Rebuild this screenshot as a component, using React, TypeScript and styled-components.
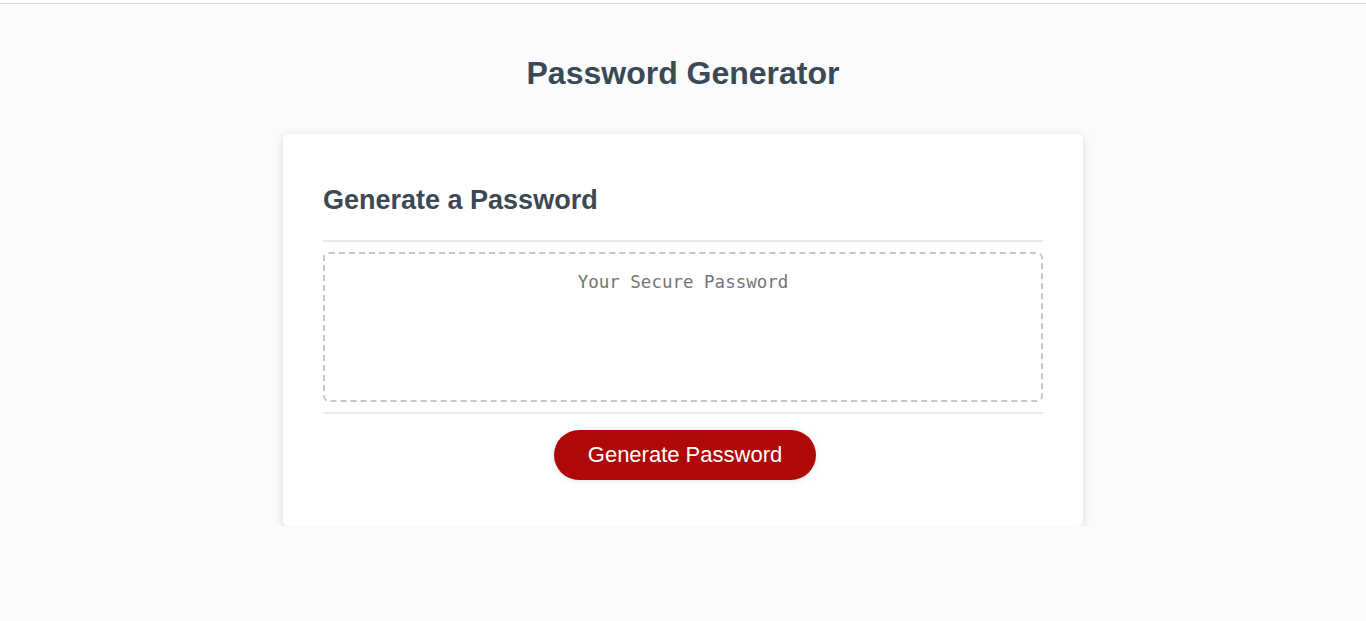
import styled, { createGlobalStyle } from "styled-components";

const textColor = "hsl(206, 17%, 28%)";
const rule = "#e7e9eb";

const GlobalStyle = createGlobalStyle`
  html, body {
    margin: 0;
    padding: 0;
  }
  body {
    font-family: "Liberation Sans", Arial, sans-serif;
    background-color: #f9fbfd;
  }
`;

const TopEdge = styled.div`
  height: 3px;
  background: #ffffff;
  border-bottom: 1px solid #dcdcdc;
`;

const Wrapper = styled.div`
  padding: 30px 20px 0;
`;

const Header = styled.header`
  text-align: center;
  padding: 0 20px 20px;
  color: ${textColor};

  h1 {
    font-size: 32px;
    margin: 21px 0 22.44px;
  }
`;

const Card = styled.div`
  box-sizing: border-box;
  background-color: #ffffff;
  border-radius: 5px;
  box-shadow: rgba(0, 0, 0, 0.15) 0px 2px 8px 0px;
  color: ${textColor};
  font-size: 18px;
  margin: 0 auto;
  max-width: 800px;
  padding: 30px 40px;
`;

const CardHeader = styled.div`
  h2 {
    font-size: 27px;
    margin: 20.9px 0 23.9px;
  }
`;

const Divider = styled.div`
  width: 100%;
  height: 2px;
  background: ${rule};
`;

const CardBody = styled.div`
  min-height: 100px;
`;

const PasswordBox = styled.textarea`
  appearance: none;
  display: block;
  box-sizing: border-box;
  width: 100%;
  height: 150px;
  margin: 10px 0;
  padding: 17px 15px 83px;
  font-family: "DejaVu Sans Mono", monospace;
  font-size: 17.5px;
  line-height: 23px;
  text-align: center;
  border: 2px dashed #c0c7cf;
  border-radius: 6px;
  resize: none;
  overflow: hidden;
  outline: none;
  background: #ffffff;

  &::placeholder {
    color: #757575;
  }
`;

const CardFooter = styled.div`
  text-align: center;
`;

const GenerateButton = styled.button`
  border: none;
  background-color: hsl(360, 91%, 36%);
  border-radius: 25px;
  box-shadow: rgba(0, 0, 0, 0.1) 0px 1px 6px 0px;
  color: #ffffff;
  display: inline-block;
  font-family: "Liberation Sans", Arial, sans-serif;
  font-size: 22px;
  line-height: 22px;
  margin: 16px 16px 16px 20px;
  padding: 14px 34px;
  text-align: center;
  cursor: pointer;
`;

const App = () => (
  <>
    <GlobalStyle />
    <TopEdge />
    <Wrapper>
      <Header>
        <h1>Password Generator</h1>
      </Header>
      <Card>
        <CardHeader>
          <h2>Generate a Password</h2>
          <Divider />
        </CardHeader>
        <CardBody>
          <PasswordBox
            readOnly
            placeholder="Your Secure Password"
            aria-label="Generated Password"
          />
        </CardBody>
        <CardFooter>
          <Divider />
          <GenerateButton>Generate Password</GenerateButton>
        </CardFooter>
      </Card>
    </Wrapper>
  </>
);

export default App;
